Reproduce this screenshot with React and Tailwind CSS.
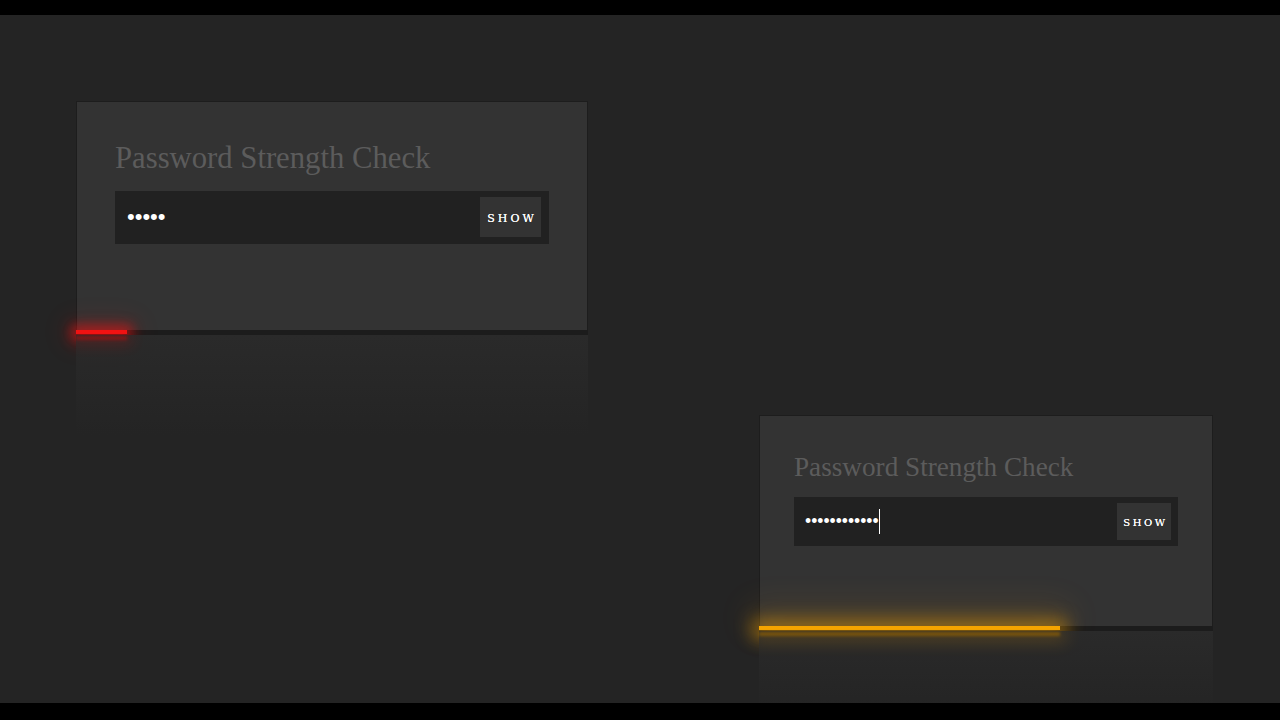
import React from 'react';

const cards = [
  {
    id: 'weak',
    wrap: 'ml-[76px] mt-[86px] w-[512px]',
    panel: 'h-[229px] pt-[41px] px-[38px]',
    title: 'text-[30.7px]',
    field: 'mt-[17px] h-[53px] pl-[12px] pr-[8px]',
    dots: 'text-[22px] h-[20px] tracking-[0px]',
    button: 'w-[61px] h-[40px] pt-[2px] text-[11px] tracking-[3px] pl-[3px]',
    caretSize: 'h-[25px]',
    password: '12345',
    caret: false,
    strength: 10,
    fill: 'bg-[#f01414] shadow-[0_0_12px_5px_rgba(255,20,20,0.5),0_0_26px_10px_rgba(255,0,0,0.12)]',
    mirror: 'bg-[#a01010] shadow-[0_0_14px_5px_rgba(255,0,0,0.22)]',
    reflect: 'h-[100px]',
  },
  {
    id: 'medium',
    wrap: 'ml-[759px] mt-[80px] w-[454px]',
    panel: 'h-[211px] pt-[38px] px-[34px]',
    title: 'text-[27.2px]',
    field: 'mt-[16px] h-[49px] pl-[11px] pr-[7px]',
    dots: 'text-[17.5px] h-[18px] tracking-[0px]',
    button: 'w-[54px] h-[37px] pt-[2px] text-[10px] tracking-[2.6px] pl-[3px]',
    caretSize: 'h-[25px]',
    password: 'abcdefgh1234',
    caret: true,
    strength: 66.3,
    fill: 'bg-[#f5a500] shadow-[0_0_18px_7px_rgba(245,165,0,0.45),0_-10px_34px_10px_rgba(245,160,0,0.12)]',
    mirror: 'bg-[#9a6600] shadow-[0_0_16px_6px_rgba(245,160,0,0.22)]',
    reflect: 'h-[80px]',
  },
];

function StrengthCard({ card }) {
  return (
    <div className={`relative flex flex-col ${card.wrap}`}>
      <div className={`flex flex-col border-x border-t border-[#1d1d1d] bg-[#333333] ${card.panel}`}>
        <h2 className={`leading-none text-[#5c5c5c] font-['Liberation_Serif',serif] ${card.title}`}>
          Password Strength Check
        </h2>
        <div className={`flex items-center justify-between bg-[#212121] ${card.field}`}>
          <div className="flex items-center">
            <span className={`flex items-center leading-none text-white font-['Liberation_Sans',sans-serif] ${card.dots}`}>
              {'•'.repeat(card.password.length)}
            </span>
            {card.caret && <span className={`w-px bg-white ${card.caretSize}`} />}
          </div>
          <button className={`flex items-center justify-center bg-[#333333] leading-none text-white [text-shadow:0_0_0.5px_#fff] font-['DejaVu_Serif',serif] ${card.button}`}>
            SHOW
          </button>
        </div>
      </div>

      {/* strength bar */}
      <div className="h-[5px] w-full bg-[#1c1c1c]">
        <div className={`h-[4px] ${card.fill}`} style={{ width: `${card.strength}%` }} />
      </div>

      {/* floor reflection */}
      <div className={`absolute left-0 right-0 top-full bg-linear-to-b from-[#2a2a2a] to-transparent ${card.reflect}`}>
        <div className={`mt-[1px] h-[4px] opacity-70 blur-[1.5px] ${card.mirror}`} style={{ width: `${card.strength}%` }} />
      </div>
    </div>
  );
}

export default function App() {
  return (
    <div className="flex h-[720px] w-[1280px] flex-col bg-black">
      <div className="h-[15px] bg-black" />
      <div className="flex h-[688px] flex-col overflow-hidden bg-[#242424]">
        {cards.map((card) => (
          <StrengthCard key={card.id} card={card} />
        ))}
      </div>
      <div className="flex-1 bg-black" />
    </div>
  );
}
